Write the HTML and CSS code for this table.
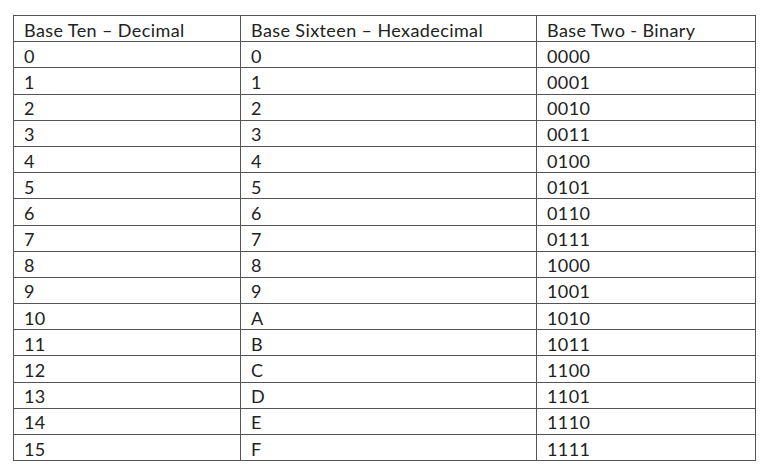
FILE: index.html
```html
<!DOCTYPE html>
<html>
<head>
<meta charset="utf-8">
<link rel="stylesheet" href="styles.css">
</head>
<body>
<table class="conv">
  <colgroup><col class="c1"><col class="c2"><col class="c3"></colgroup>
  <tr><td>Base Ten – Decimal</td><td>Base Sixteen – Hexadecimal</td><td>Base Two - Binary</td></tr>
  <tr><td>0</td><td>0</td><td>0000</td></tr>
  <tr><td>1</td><td>1</td><td>0001</td></tr>
  <tr><td>2</td><td>2</td><td>0010</td></tr>
  <tr><td>3</td><td>3</td><td>0011</td></tr>
  <tr><td>4</td><td>4</td><td>0100</td></tr>
  <tr><td>5</td><td>5</td><td>0101</td></tr>
  <tr><td>6</td><td>6</td><td>0110</td></tr>
  <tr><td>7</td><td>7</td><td>0111</td></tr>
  <tr><td>8</td><td>8</td><td>1000</td></tr>
  <tr><td>9</td><td>9</td><td>1001</td></tr>
  <tr><td>10</td><td>A</td><td>1010</td></tr>
  <tr><td>11</td><td>B</td><td>1011</td></tr>
  <tr><td>12</td><td>C</td><td>1100</td></tr>
  <tr><td>13</td><td>D</td><td>1101</td></tr>
  <tr><td>14</td><td>E</td><td>1110</td></tr>
  <tr><td>15</td><td>F</td><td>1111</td></tr>
</table>
</body>
</html>
```
FILE: styles.css
```css
html, body {
  margin: 0;
  background: #fff;
}
body {
  padding: 15px 13px 0 13px;
  font-family: Lato, "Liberation Sans", sans-serif;
  font-size: 18px;
  letter-spacing: 0.4px;
  color: #222;
}
.conv {
  border-collapse: collapse;
  width: 742px;
  table-layout: fixed;
}
.c1 { width: 227px; }
.c2 { width: 296px; }
.c3 { width: 219px; }
.conv td {
  border: 1px solid #555;
  height: 26.2px;
  padding: 3px 10px 0 10px;
  box-sizing: border-box;
  line-height: 21px;
  vertical-align: middle;
}
```
